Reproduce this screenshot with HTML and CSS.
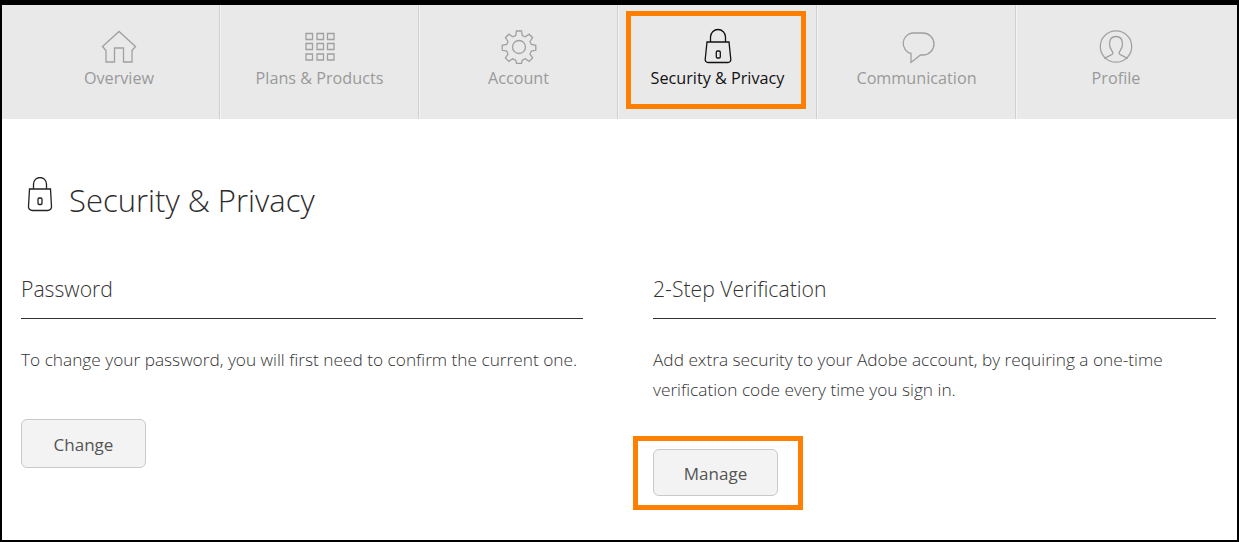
FILE: index.html
```html
<!DOCTYPE html>
<html lang="en">
<head>
    <meta charset="UTF-8">
    <meta name="viewport" content="width=device-width, initial-scale=1.0">
    <title>Security &amp; Privacy</title>
    <link rel="stylesheet" href="styles.css">
</head>
<body>
    <div class="frame">
        <nav class="tabs">
            <a class="tab">
                <svg class="tab-icon" viewBox="0 0 36 34"><path d="M5 20.5 1.500 16.500 18 1.500 34.500 16.500 31 20.500V32H22.500V18H13.500V32H5Z"/></svg>
                <span>Overview</span>
            </a>
            <a class="tab">
                <svg class="tab-icon" viewBox="0 0 36 34"><path d="M4 3.500h6.500v6H4zM15 3.500h6.500v6H15zM25.500 3.500H32v6h-6.500zM4 13.500h6.500v6H4zM15 13.500h6.500v6H15zM25.500 13.500H32v6h-6.500zM4 24h6.500v6H4zM15 24h6.500v6H15zM25.500 24H32v6h-6.500z"/></svg>
                <span>Plans &amp; Products</span>
            </a>
            <a class="tab">
                <svg class="tab-icon" viewBox="0 0 36 34"><circle cx="18" cy="17" r="6.500"/><path d="M15.500 1h5l.8 4.500 3 1.300 3.800-2.600 3.500 3.500-2.600 3.800 1.300 3 4.500.8v5l-4.500.8-1.300 3 2.600 3.800-3.500 3.500-3.800-2.600-3 1.300-.8 3.300h-5l-.8-3.300-3-1.300-3.800 2.600-3.500-3.500 2.600-3.800-1.300-3-4.500-.8v-5l4.500-.8 1.300-3-2.600-3.800 3.500-3.500 3.800 2.600 3-1.300z"/></svg>
                <span>Account</span>
            </a>
            <a class="tab active">
                <svg class="tab-icon" viewBox="0 0 36 34"><path d="M10.500 12V7a7.500 7.500 0 0 1 15 0V12M7 12h22l1.800 17.500a2.800 2.800 0 0 1-2.800 3H8a2.800 2.800 0 0 1-2.800-3z"/><rect x="16.300" y="21" width="4" height="7" rx="1.200"/></svg>
                <span>Security &amp; Privacy</span>
            </a>
            <a class="tab">
                <svg class="tab-icon" viewBox="0 0 36 34"><path d="M13 3h11a11 11 0 0 1 0 22h-2.500L12 32.500V23.500A10.500 10.500 0 0 1 13 3z"/></svg>
                <span>Communication</span>
            </a>
            <a class="tab">
                <svg class="tab-icon" viewBox="0 0 36 34"><circle cx="18" cy="16.500" r="15.700"/><path d="M6.500 29c1.500-3 8.500-3.500 8.500-6 0-1.500-3.500-3.500-3.500-9 0-5 2.500-7.500 6.500-7.500s6.500 2.500 6.500 7.500c0 5.500-3.500 7.500-3.500 9 0 2.500 7 3 8.500 6"/></svg>
                <span>Profile</span>
            </a>
        </nav>

        <main class="content">
            <h1 class="page-title">
                <svg class="title-icon" viewBox="0 0 28 36"><path d="M7.500 12V7a6.500 6.500 0 0 1 13 0v5M3.500 12h21l1 17.500a3.800 3.800 0 0 1-3.800 4H6.300a3.800 3.800 0 0 1-3.800-4z"/><rect x="12" y="21" width="4" height="6.500" rx="1.200"/></svg>
                Security &amp; Privacy
            </h1>
            <div class="columns">
                <section class="column">
                    <h2>Password</h2>
                    <p>To change your password, you will first need to confirm the current one.</p>
                    <button class="btn btn-change" type="button">Change</button>
                </section>
                <section class="column">
                    <h2>2-Step Verification</h2>
                    <p>Add extra security to your Adobe account, by requiring a one-time verification code every time you sign in.</p>
                    <button class="btn btn-manage" type="button">Manage</button>
                </section>
            </div>
        </main>

        <!-- orange callouts drawn over the screenshot -->
        <div class="callout callout-tab"></div>
        <div class="callout callout-manage"></div>
    </div>
</body>
</html>
```

FILE: styles.css
```css
* {
    box-sizing: border-box;
    margin: 0;
    padding: 0;
}
html, body {
    height: 100%;
    overflow: hidden;
}
body {
    font-family: 'Open Sans', sans-serif;
    background-color: #fff;
}
.frame {
    position: relative;
    height: 542px;
    border: 2px solid #000;
    border-top-width: 5px;
    background-color: #fff;
}
.tabs {
    display: flex;
    height: 114px;
    padding-left: 19px;
    background-color: #e9e9e9;
}
.tab {
    display: flex;
    flex-direction: column;
    align-items: center;
    width: 199px;
    padding: 25px 0 0 1px;
    border-right: 1px solid #d0d0d0;
    box-shadow: 1px 0 0 #f4f4f4;
    font-size: 16.2px;
    line-height: 22px;
    color: #9a9a9a;
}
.tab:first-child {
    padding-right: 3px;
}
.tab:last-child {
    border-right: none;
    box-shadow: none;
}
.tab-icon {
    width: 36px;
    height: 34px;
    margin-bottom: 3px;
    overflow: visible;
    fill: none;
    stroke: #a0a0a0;
    stroke-width: 1.3;
}
.tab.active {
    color: #111;
}
.tab.active .tab-icon {
    stroke: #111;
}
.content {
    padding: 57px 21px 0 19px;
}
.page-title {
    display: flex;
    align-items: center;
    gap: 15px;
    padding-left: 5px;
    height: 48px;
    font-size: 31px;
    font-weight: 300;
    color: #2c2c2c;
}
.title-icon {
    width: 28px;
    height: 36px;
    margin-top: -10px;
    fill: none;
    stroke: #222;
    stroke-width: 1.3;
}
.columns {
    display: grid;
    grid-template-columns: 562px 563px;
    gap: 70px;
    margin-top: 39px;
}
.column h2 {
    height: 56px;
    padding-top: 11px;
    border-bottom: 1px solid #333;
    font-size: 21.2px;
    line-height: 30px;
    font-weight: 300;
    color: #333;
}
.column p {
    margin-top: 26px;
    font-size: 17.25px;
    line-height: 30px;
    font-weight: 300;
    color: #333;
}
.btn {
    display: block;
    width: 125px;
    padding-top: 2px;
    background-color: #f3f3f3;
    border: 1px solid #c9c9c9;
    border-radius: 6px;
    font-family: inherit;
    font-size: 17px;
    color: #555;
}
.btn-change {
    height: 49px;
    margin-top: 44px;
}
.btn-manage {
    height: 47px;
    margin-top: 44px;
}
.callout {
    position: absolute;
    border: 5px solid #ff8000;
}
.callout-tab {
    left: 624px;
    top: 6px;
    width: 180px;
    height: 98px;
}
.callout-manage {
    left: 631px;
    top: 431px;
    width: 170px;
    height: 74px;
}
```
